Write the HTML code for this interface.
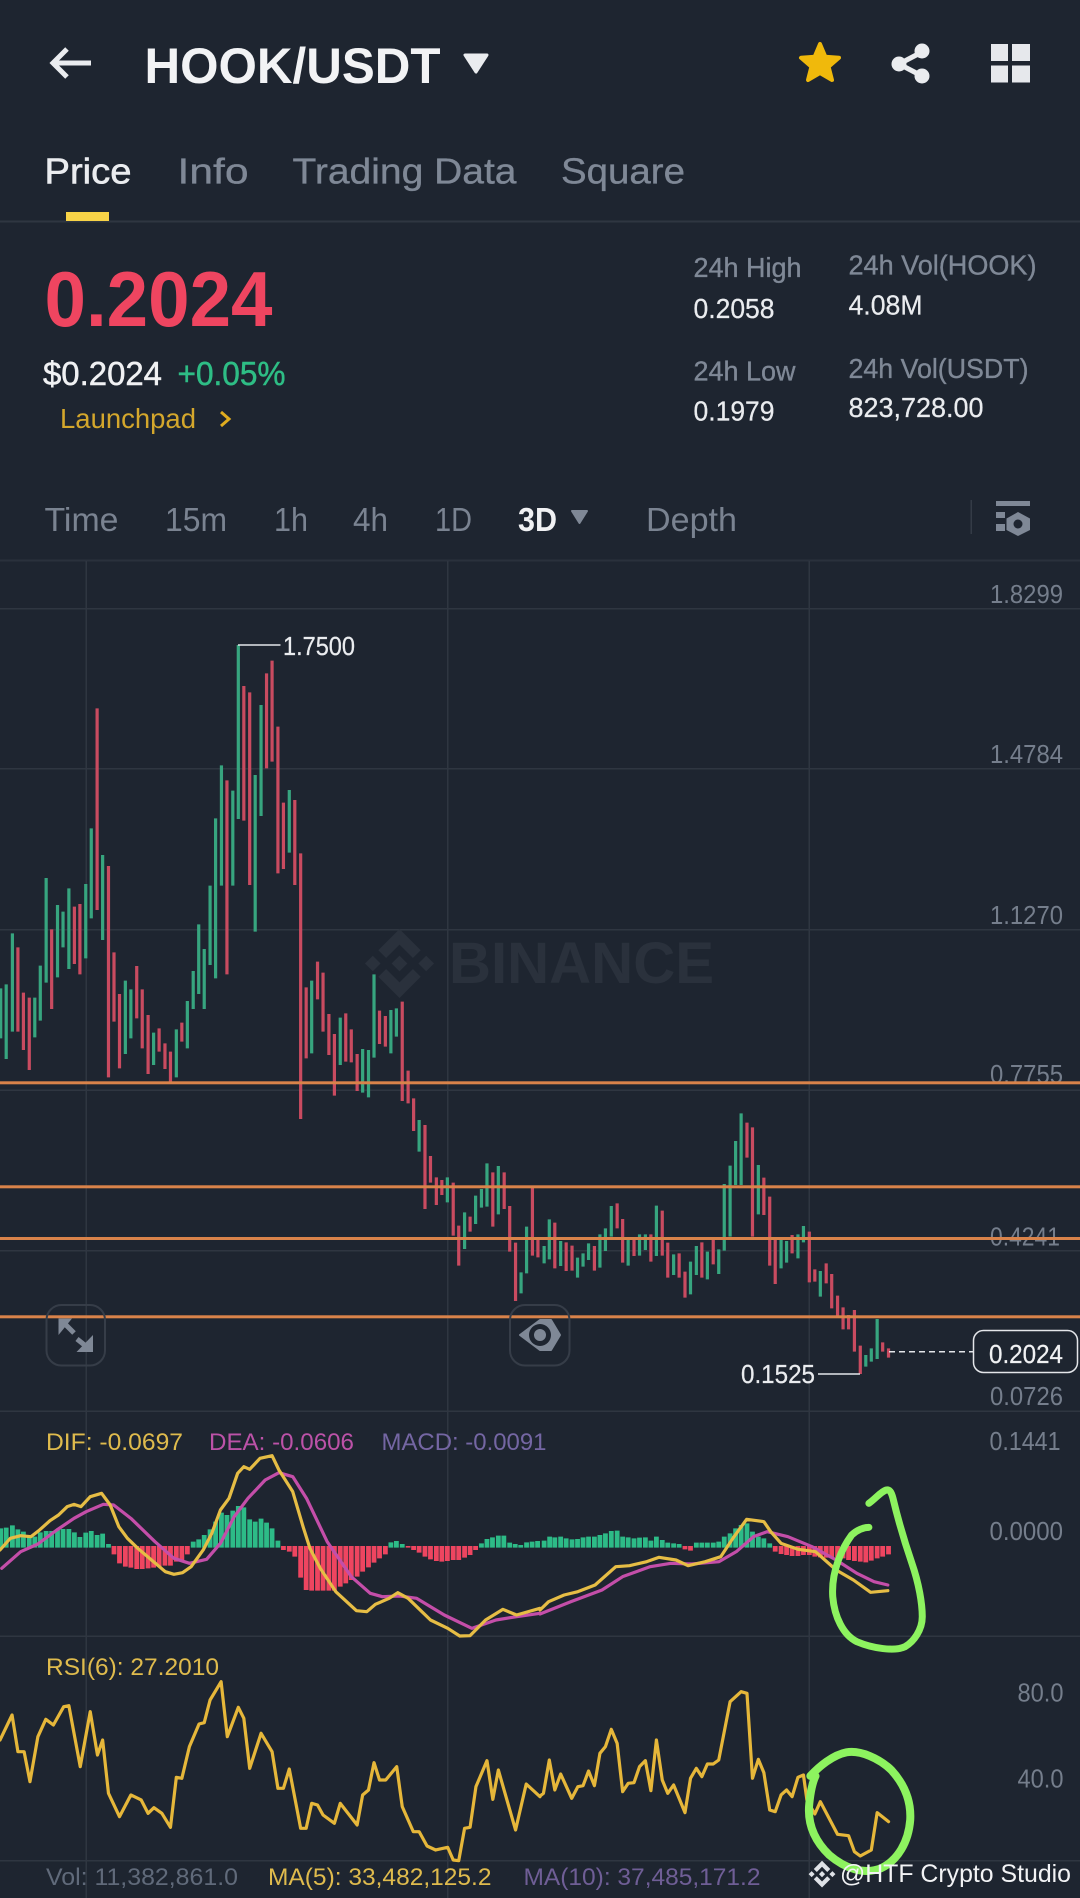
<!DOCTYPE html>
<html><head><meta charset="utf-8"><title>HOOK/USDT</title>
<style>
html,body{margin:0;padding:0;background:#1e2530;width:1080px;height:1898px;overflow:hidden}
svg{display:block}
text{font-family:"Liberation Sans",sans-serif}
.g{fill:#7f8896;stroke:#7f8896;stroke-width:.35}.w{fill:#eaecef;stroke:#eaecef;stroke-width:.25}.a{fill:#757e8c;font-size:26px}
.cd{fill:none;stroke-width:3.2;vector-effect:non-scaling-stroke}
.cd path,.ln path{vector-effect:non-scaling-stroke}
.ln path{fill:none;stroke-linejoin:round;stroke-linecap:round}
</style></head><body>
<svg xmlns="http://www.w3.org/2000/svg" width="1080" height="1898" viewBox="0 0 1080 1898">
<rect width="1080" height="1898" fill="#1e2530"/>

<!-- header -->
<path d="M91 63H54M67 49L53 63L67 77" fill="none" stroke="#eaecef" stroke-width="5"/>
<text x="144.5" y="83" font-size="50" font-weight="700" fill="#f2f3f5" textLength="296" lengthAdjust="spacingAndGlyphs">HOOK/USDT</text>
<path d="M465 55H487L476 72Z" fill="#eaecef" stroke="#eaecef" stroke-width="3" stroke-linejoin="round"/>
<path d="M820 44L825.3 56.7L839 57.8L828.6 66.8L832 80L820 73L808 80L811.4 66.8L801 57.8L814.7 56.7Z" fill="#f0b90b" stroke="#f0b90b" stroke-width="4" stroke-linejoin="round"/>
<g fill="#eaecef" stroke="#eaecef"><path d="M922 52L899 64L922 76" fill="none" stroke-width="5"/><circle cx="922" cy="51" r="7.5" stroke="none"/><circle cx="899" cy="64" r="7.5" stroke="none"/><circle cx="922" cy="76" r="7.5" stroke="none"/></g>
<g fill="#e6e8ec"><rect x="991" y="44" width="17" height="17"/><rect x="1012" y="44" width="18" height="17"/><rect x="991" y="65.5" width="17" height="17"/><rect x="1012" y="65.5" width="18" height="17"/></g>

<!-- tabs -->
<text x="44.5" y="183.5" font-size="36" fill="#eaecef" textLength="87" lengthAdjust="spacingAndGlyphs" stroke="#eaecef" stroke-width=".6">Price</text>
<text x="177.5" y="183.5" font-size="36" class="g" textLength="71" lengthAdjust="spacingAndGlyphs">Info</text>
<text x="292.5" y="183.5" font-size="36" class="g" textLength="224" lengthAdjust="spacingAndGlyphs">Trading Data</text>
<text x="561" y="183.5" font-size="36" class="g" textLength="124" lengthAdjust="spacingAndGlyphs">Square</text>
<rect x="0" y="220.5" width="1080" height="2" fill="#2f3641"/>
<rect x="66" y="212" width="43" height="9" fill="#f8d347"/>

<!-- price block -->
<text x="44.5" y="326" font-size="78" font-weight="700" fill="#ef4560" textLength="228" lengthAdjust="spacingAndGlyphs">0.2024</text>
<text x="43" y="385" font-size="33" fill="#f0f1f3" textLength="119" lengthAdjust="spacingAndGlyphs" stroke="#f0f1f3" stroke-width=".5">$0.2024</text>
<text x="177.5" y="385" font-size="33" fill="#2ebd85" stroke="#2ebd85" stroke-width=".5" textLength="108" lengthAdjust="spacingAndGlyphs">+0.05%</text>
<text x="60" y="428" font-size="28" fill="#d4a72c" textLength="136" lengthAdjust="spacingAndGlyphs">Launchpad</text>
<path d="M221 412L229 419L221 426" fill="none" stroke="#e0ac1f" stroke-width="3"/>

<text x="693.5" y="277" font-size="28" class="g" textLength="108" lengthAdjust="spacingAndGlyphs">24h High</text>
<text x="693.5" y="318" font-size="28" class="w" textLength="81" lengthAdjust="spacingAndGlyphs">0.2058</text>
<text x="848.5" y="274.5" font-size="28" class="g" textLength="188" lengthAdjust="spacingAndGlyphs">24h Vol(HOOK)</text>
<text x="848.5" y="314.5" font-size="28" class="w" textLength="74" lengthAdjust="spacingAndGlyphs">4.08M</text>
<text x="693.5" y="380.5" font-size="28" class="g" textLength="102" lengthAdjust="spacingAndGlyphs">24h Low</text>
<text x="693.5" y="420.5" font-size="28" class="w" textLength="81" lengthAdjust="spacingAndGlyphs">0.1979</text>
<text x="848.5" y="378" font-size="28" class="g" textLength="180" lengthAdjust="spacingAndGlyphs">24h Vol(USDT)</text>
<text x="848.5" y="417" font-size="28" class="w" textLength="135" lengthAdjust="spacingAndGlyphs">823,728.00</text>

<!-- interval row -->
<g font-size="33" fill="#7a8391">
<text x="44.5" y="531" textLength="74" lengthAdjust="spacingAndGlyphs">Time</text>
<text x="165" y="531" textLength="62" lengthAdjust="spacingAndGlyphs">15m</text>
<text x="274" y="531" textLength="34" lengthAdjust="spacingAndGlyphs">1h</text>
<text x="353" y="531" textLength="35" lengthAdjust="spacingAndGlyphs">4h</text>
<text x="435" y="531" textLength="37" lengthAdjust="spacingAndGlyphs">1D</text>
<text x="646" y="531" textLength="91" lengthAdjust="spacingAndGlyphs">Depth</text>
</g>
<text x="518" y="531" font-size="33" font-weight="700" fill="#f0f1f3" textLength="39" lengthAdjust="spacingAndGlyphs">3D</text>
<path d="M572 511H587L579.5 523Z" fill="#7f8896" stroke="#7f8896" stroke-width="2" stroke-linejoin="round"/>
<rect x="970.5" y="500" width="1.5" height="34" fill="#343b46"/>
<g fill="#7f8896"><rect x="996" y="501" width="34" height="5"/><rect x="996" y="512" width="9" height="6"/><rect x="996" y="524" width="9" height="7"/>
<path d="M1018 512L1030 518.5V530L1018 536L1006.5 530V518.5Z"/><circle cx="1018" cy="524" r="4.5" fill="#1e2530"/></g>
<rect x="0" y="559.5" width="1080" height="2" fill="#2a313c"/>

<!-- grid -->
<g fill="#2f3641">
<rect x="85.5" y="561" width="1.5" height="1337"/><rect x="447" y="561" width="1.5" height="1337"/><rect x="808.5" y="561" width="1.5" height="1337"/>
<rect y="608" width="1080" height="1.5"/><rect y="768" width="1080" height="1.5"/><rect y="929" width="1080" height="1.5"/><rect y="1089.5" width="1080" height="1.5"/><rect y="1250" width="1080" height="1.5"/><rect y="1410.5" width="1080" height="1.5"/><rect y="1635.5" width="1080" height="1.5"/><rect y="1860" width="1080" height="1.5"/>
</g>

<!-- binance watermark -->
<g fill="#2a313c" transform="translate(365,929) scale(.545)">
<path d="M38.73 53.2l24.59-24.58 24.6 24.6 14.3-14.31L63.32 0 24.42 38.9z"/><path d="M0 63.31l14.3-14.31 14.31 14.31-14.31 14.3z"/><path d="M38.73 73.41l24.59 24.59 24.6-24.6 14.31 14.29-38.9 38.91-38.91-38.88-.02-.02z"/><path d="M98 63.31l14.3-14.31 14.31 14.3-14.31 14.32z"/><path d="M77.83 63.3L63.32 48.78 52.59 59.51l-1.24 1.23-2.54 2.54 14.51 14.5 14.51-14.47z"/>
</g>
<text x="449" y="983" font-size="58" font-weight="700" fill="#2a313c" textLength="265" lengthAdjust="spacingAndGlyphs">BINANCE</text>

<!-- candles left -->
<g class="cd" transform="translate(0,570) scale(.34439,.33333)">
<path stroke="#37a57f" d="M2 1255V1405M18 1243V1467M36 1090V1385M101 1283V1402M117 1187V1352M134 924V1238M167 1005V1222M183 1025V1132M200 955V1197M249 942V1165M265 775V1045M298 855V1110M364 1232V1452M380 1258V1405M446 1388V1485M512 1378V1522M544 1293V1435M561 1203V1317M577 1063V1272M593 1137V1317M610 947V1185M626 745V1225M643 586V947M676 662V947M692 225V747M741 615V1085M758 405V738M840 660V848M905 1232V1450M988 1343V1485M1053 1437V1568M1070 1440V1582M1086 1213V1463M1135 1320V1450M1151 1315V1400M1217 1650V1745M1299 1822V1897M1349 1927V2037M1381 1877V1962M1398 1857V1913M1414 1780V1910M1447 1788V1933M1513 2107V2170M1529 1970V2110"/>
<path stroke="#c94b60" d="M52 1132V1385M68 1268V1440M85 1283V1500M150 1078V1317M216 1010V1182M232 1002V1213M282 415V1020M315 888V1522M331 1147V1355M347 1272V1495M397 1188V1345M413 1258V1435M430 1335V1512M462 1375V1445M479 1420V1497M495 1445V1535M528 1358V1415M659 631V1213M708 348V752M725 367V945M774 310V595M790 272V575M807 470V910M823 698V897M856 690V945M873 850V1647M889 1252V1465M922 1175V1288M938 1208V1385M955 1332V1455M971 1392V1577M1004 1330V1475M1020 1378V1477M1037 1452V1563M1102 1322V1422M1119 1338V1430M1168 1295V1593M1185 1502V1600M1201 1585V1683M1234 1665V1917M1250 1758V1838M1267 1822V1905M1283 1830V1875M1316 1838V1997M1332 1967V2087M1365 1940V1985M1431 1807V1970M1464 1807V1917M1480 1908V2045M1497 2018V2193M1546 1853V2057M1562 2007V2062"/>
</g>
<!-- candles right -->
<g class="cd" transform="translate(540,1020) scale(.34439,.33333)">
<path stroke="#37a57f" d="M12 678V730M27 598V718M60 663V738M109 713V773M125 700V740M141 670V720M174 643V743M190 625V693M207 558V650M256 660V737M289 643V707M306 643V690M338 557V708M388 703V765M437 725V823M454 678V765M486 695V778M519 688V762M535 492V692M552 437V650M568 363V495M584 280V495M634 435V583M700 660V745M716 663V728M749 643V715M765 618V667M814 753V830M946 1005V1040M962 985V1025M979 897V1017"/>
<path stroke="#c94b60" d="M43 608V745M76 667V753M93 677V752M158 678V752M224 550V625M240 597V728M273 660V708M322 643V725M355 572V707M371 668V773M404 700V773M421 755V833M470 667V773M503 658V733M601 308V413M617 322V650M650 473V585M667 530V737M683 658V792M732 645V700M782 635V787M798 748V785M831 730V790M847 762V865M864 827V890M880 862V928M896 885V928M913 870V995M930 977V1062M995 967V995M1012 985V1013"/>
</g>

<!-- axis labels behind orange -->
<text x="990" y="603" class="a" textLength="73" lengthAdjust="spacingAndGlyphs">1.8299</text>
<text x="990" y="763" class="a" textLength="73" lengthAdjust="spacingAndGlyphs">1.4784</text>
<text x="990" y="924" class="a" textLength="73" lengthAdjust="spacingAndGlyphs">1.1270</text>
<text x="990" y="1083" class="a" textLength="73" lengthAdjust="spacingAndGlyphs">0.7755</text>
<text x="990" y="1245.5" class="a" textLength="70" lengthAdjust="spacingAndGlyphs">0.4241</text>
<text x="990" y="1405" class="a" textLength="73" lengthAdjust="spacingAndGlyphs">0.0726</text>

<!-- orange levels -->
<g fill="#d9834a"><rect y="1081.3" width="1080" height="3"/><rect y="1185.3" width="1080" height="3"/><rect y="1237" width="1080" height="3"/><rect y="1315.3" width="1080" height="3"/></g>

<!-- high / low / last -->
<path d="M238 645H280.5M818 1374H860" stroke="#e4e6ea" stroke-width="1.5" fill="none"/>
<text x="283" y="655" font-size="26" class="w" textLength="72" lengthAdjust="spacingAndGlyphs">1.7500</text>
<text x="741" y="1383" font-size="26" class="w" textLength="74" lengthAdjust="spacingAndGlyphs">0.1525</text>
<path d="M889 1351.7H973" stroke="#e4e6ea" stroke-width="1.5" stroke-dasharray="6 4" fill="none"/>
<rect x="973.5" y="1330.5" width="104" height="42" rx="10" fill="#1e2530" stroke="#e4e6ea" stroke-width="1.5"/>
<text x="989" y="1363" font-size="26" fill="#f0f1f3" stroke="#f0f1f3" stroke-width=".25" textLength="74" lengthAdjust="spacingAndGlyphs">0.2024</text>

<!-- buttons -->
<rect x="46.5" y="1305" width="58.5" height="60.5" rx="15" fill="none" stroke="#363d48" stroke-width="2"/>
<g fill="#7f8896"><path d="M58.5 1318.5H72L58.5 1335Z"/><path d="M93 1352H76.5L93 1335Z"/><path d="M64 1323L74 1333M77 1339L87 1347" stroke="#7f8896" stroke-width="5" fill="none"/></g>
<rect x="510" y="1305" width="59.5" height="60.5" rx="15" fill="none" stroke="#363d48" stroke-width="2"/>
<path d="M520 1335L540 1320H551L560 1335L551 1350H540Z" fill="#7f8896" stroke="#7f8896" stroke-width="2" stroke-linejoin="round"/>
<circle cx="540" cy="1335" r="11" fill="#1e2530"/><circle cx="540" cy="1335" r="6" fill="#7f8896"/>

<!-- MACD labels -->
<text x="46" y="1450" font-size="24" fill="#dfbb4d" textLength="137" lengthAdjust="spacingAndGlyphs">DIF: -0.0697</text>
<text x="209" y="1450" font-size="24" fill="#bc52a8" textLength="145" lengthAdjust="spacingAndGlyphs">DEA: -0.0606</text>
<text x="381.5" y="1450" font-size="24" fill="#7466a3" textLength="165" lengthAdjust="spacingAndGlyphs">MACD: -0.0091</text>
<text x="989.5" y="1450" class="a" textLength="71" lengthAdjust="spacingAndGlyphs">0.1441</text>
<text x="989.5" y="1540" class="a" textLength="73.5" lengthAdjust="spacingAndGlyphs">0.0000</text>

<!-- histogram left -->
<g class="cd" style="stroke-width:4.8" transform="translate(0,1420) scale(.34439,.33333)">
<path stroke="#2dbb87" d="M2 383V325M18 383V323M36 383V316M52 383V328M68 383V335M85 383V350M101 383V350M117 383V337M134 383V333M150 383V333M167 383V330M183 383V327M200 383V327M216 383V337M232 383V351M249 383V338M265 383V333M282 383V345M298 383V341M315 383V372M561 383V365M577 383V358M593 383V345M610 383V328M626 383V305M643 383V278M659 383V285M676 383V272M692 383V258M708 383V262M725 383V298M741 383V305M758 383V296M774 383V308M790 383V325M807 383V362M1135 383V367M1151 383V363M1168 383V372M1398 383V370M1414 383V357M1430 383V352M1447 383V347M1463 383V347M1480 383V368M1496 383V372M1512 383V375M1529 383V367M1545 383V365M1561 383V363"/>
<path stroke="#ee4560" d="M331 378V403M347 378V430M364 378V440M380 378V443M397 378V447M413 378V447M430 378V445M446 378V443M462 378V440M479 378V437M495 378V437M512 378V425M528 378V420M544 378V403M823 378V390M840 378V395M856 378V410M873 378V473M889 378V510M905 378V512M922 378V512M938 378V512M955 378V512M971 378V512M988 378V500M1004 378V490M1020 378V480M1037 378V470M1053 378V455M1070 378V442M1086 378V428M1102 378V415M1119 378V403M1185 378V383M1201 378V390M1217 378V398M1234 378V410M1250 378V418M1267 378V423M1283 378V425M1299 378V423M1316 378V420M1332 378V420M1349 378V413M1365 378V405M1381 378V390"/>
</g>
<!-- histogram right -->
<g class="cd" style="stroke-width:4.8" transform="translate(540,1420) scale(.34439,.33333)">
<path stroke="#2dbb87" d="M12 383V362M28 383V350M43 383V352M60 383V350M76 383V355M93 383V358M109 383V357M125 383V352M141 383V350M158 383V350M174 383V345M190 383V340M207 383V333M224 383V332M240 383V350M256 383V352M273 383V355M289 383V353M306 383V352M322 383V362M338 383V350M355 383V360M371 383V368M388 383V370M404 383V372M454 383V368M470 383V368M486 383V368M503 383V368M519 383V365M535 383V350M552 383V340M568 383V325M584 383V315M601 383V310M617 383V335M634 383V350M650 383V355M667 383V370"/>
<path stroke="#ee4560" d="M421 378V388M437 378V392M683 378V395M700 378V402M716 378V405M732 378V408M749 378V408M765 378V405M782 378V405M798 378V410M814 378V412M831 378V413M847 378V412M864 378V413M880 378V415M896 378V420M913 378V423M930 378V425M946 378V427M962 378V422M979 378V415M995 378V410M1012 378V403"/>
</g>

<!-- MACD lines & RSI left -->
<g class="ln" transform="translate(0,1420) scale(.34439,.33333)">
<path stroke="#c44ea9" stroke-width="3.2" d="M5 445L60 395L110 372L165 330L215 295L250 275L300 253L330 255L380 295L450 365L505 415L550 430L600 418L640 370L680 290L720 235L770 180L810 158L850 170L890 235L950 365L1020 470L1075 520L1110 530L1160 528L1210 535L1290 585L1370 625L1440 600L1500 590L1568 580"/>
<path stroke="#e6bd45" stroke-width="3.2" d="M0 390L30 355L60 347L90 350L115 330L145 302L170 285L195 260L215 253L235 260L262 230L295 220L320 255L345 320L370 355L400 385L440 420L480 455L505 463L530 458L555 440L590 390L615 340L640 270L665 235L690 160L708 140L725 148L755 115L790 107L810 150L850 215L880 320L900 385L930 445L975 515L1035 572L1065 575L1090 553L1130 535L1155 518L1185 535L1250 600L1300 625L1335 648L1365 647L1410 600L1460 568L1500 585L1568 565"/>
<path stroke="#e6b73a" stroke-width="3.2" d="M0 960L35 885L52 995L70 995L87 1085L110 950L133 898L155 915L185 860L200 857L233 1040L262 875L283 1005L298 960L315 1120L347 1190L380 1125L410 1140L430 1180L447 1163L470 1180L495 1222L512 1072L528 1075L550 980L578 912L593 908L610 840L642 785L660 950L692 862L708 895L725 1045L758 940L790 995L807 1105L823 1105L840 1047L873 1225L889 1225L905 1150L922 1155L938 1185L971 1210L988 1150L1037 1215L1053 1125L1070 1110L1086 1028L1102 1080L1120 1080L1152 1040L1168 1160L1200 1235L1217 1235L1240 1278L1265 1290L1300 1282L1316 1320L1332 1322L1349 1225L1365 1222L1382 1100L1414 1022L1431 1138L1447 1050L1497 1230L1528 1092L1568 1130"/>
</g>
<!-- MACD lines & RSI right -->
<g class="ln" transform="translate(540,1420) scale(.34439,.33333)">
<path stroke="#c44ea9" stroke-width="3.2" d="M0 582L90 545L180 510L240 470L320 440L380 430L440 432L520 425L570 395L620 350L660 335L720 350L790 380L860 420L920 460L970 485L1010 495"/>
<path stroke="#e6bd45" stroke-width="3.2" d="M0 570L25 545L70 525L110 515L160 495L220 440L260 437L310 425L345 412L395 420L430 437L480 425L525 410L560 355L600 298L650 305L670 335L700 370L750 388L800 395L860 450L910 480L960 517L1010 512"/>
<path stroke="#e6b73a" stroke-width="3.2" d="M0 1128L10 1120L27 1020L43 1110L60 1062L92 1135L110 1100L125 1097L141 1053L158 1097L174 1000L190 980L207 928L224 970L240 1115L256 1090L273 1088L289 1040L306 1022L322 1112L338 960L355 1080L371 1120L388 1095L421 1178L437 1075L454 1045L470 1070L486 1032L503 1032L519 1020L552 845L584 815L601 820L617 1075L634 1018L650 1058L667 1170L683 1175L700 1125L716 1110L732 1130L749 1072L765 1065L775 1140L798 1182L814 1145L864 1243L896 1247L913 1295L930 1308L962 1290L979 1178L1012 1205"/>
<!-- hand drawn annotations -->
<path stroke="#8df35f" stroke-width="7" d="M955 250C975 235 990 215 1005 210C1015 208 1020 215 1025 235C1040 300 1060 370 1080 430C1100 490 1110 550 1110 590C1110 630 1085 665 1060 680C1030 695 965 685 920 665C880 645 855 590 850 530C845 450 880 380 905 345C920 330 940 322 955 322"/>
<path stroke="#8df35f" stroke-width="8" d="M785 1068C810 1040 850 1005 890 997C930 990 985 1015 1020 1050C1060 1095 1078 1145 1075 1200C1070 1265 1040 1320 990 1345C940 1365 885 1345 840 1305C800 1265 775 1215 782 1150C785 1120 790 1090 800 1068"/>
</g>

<!-- RSI labels -->
<text x="46" y="1675" font-size="24" fill="#dfbb4d" textLength="173" lengthAdjust="spacingAndGlyphs">RSI(6): 27.2010</text>
<text x="1017.5" y="1701.5" class="a" textLength="46" lengthAdjust="spacingAndGlyphs">80.0</text>
<text x="1017.5" y="1787.5" class="a" textLength="46" lengthAdjust="spacingAndGlyphs">40.0</text>

<!-- bottom legend -->
<text x="46" y="1885" font-size="24" fill="#606a7a" textLength="192" lengthAdjust="spacingAndGlyphs">Vol: 11,382,861.0</text>
<text x="268" y="1885" font-size="24" fill="#dfbb4d" textLength="223.5" lengthAdjust="spacingAndGlyphs">MA(5): 33,482,125.2</text>
<text x="523.5" y="1885" font-size="24" fill="#6f5e96" textLength="237" lengthAdjust="spacingAndGlyphs">MA(10): 37,485,171.2</text>

<!-- credit -->
<g fill="#dfe2e7" transform="translate(808.6,1860.7) scale(.212)">
<path d="M38.73 53.2l24.59-24.58 24.6 24.6 14.3-14.31L63.32 0 24.42 38.9z"/><path d="M0 63.31l14.3-14.31 14.31 14.31-14.31 14.3z"/><path d="M38.73 73.41l24.59 24.59 24.6-24.6 14.31 14.29-38.9 38.91-38.91-38.88-.02-.02z"/><path d="M98 63.31l14.3-14.31 14.31 14.3-14.31 14.32z"/><path d="M77.83 63.3L63.32 48.78 52.59 59.51l-1.24 1.23-2.54 2.54 14.51 14.5 14.51-14.47z"/>
</g>
<text x="840" y="1882" font-size="25" fill="#f2f3f5" textLength="231" lengthAdjust="spacingAndGlyphs">@HTF Crypto Studio</text>
</svg>
</body></html>
